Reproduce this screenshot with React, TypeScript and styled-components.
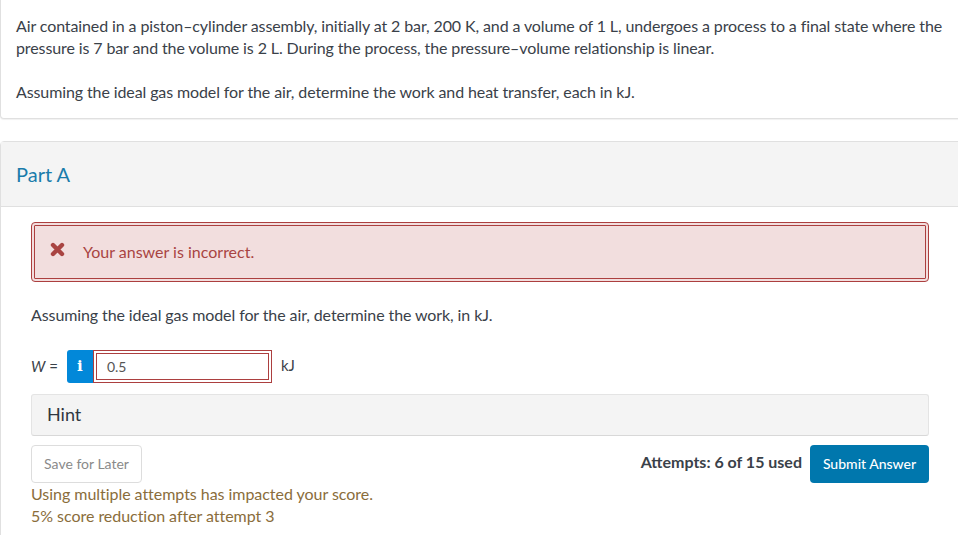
import React from "react";
import styled, { createGlobalStyle } from "styled-components";

const GlobalStyle = createGlobalStyle`
  html, body {
    margin: 0;
    padding: 0;
    background: #fff;
    overflow: hidden;
    height: 535px;
  }
  body {
    font-family: Lato, "Open Sans", sans-serif;
    color: #3a4149;
  }
`;

const Page = styled.div`
  width: 958px;
  height: 535px;
  overflow: hidden;
  display: flex;
  flex-direction: column;
`;

const QuestionCard = styled.section`
  box-sizing: border-box;
  flex: none;
  width: 970px;
  height: 119px;
  padding: 15px 15px 0;
  background: #fff;
  border: 1px solid #e0e0e0;
  border-top: 0;
  border-radius: 0 0 4px 4px;
  box-shadow: 0 1px 1px rgba(0, 0, 0, 0.06);
  font-size: 16px;
  line-height: 22px;
  letter-spacing: -0.11px;
`;

const Paragraph = styled.p`
  margin: 0 0 22px;
  width: 930px;
`;

const PartCard = styled.section`
  box-sizing: border-box;
  flex: none;
  width: 970px;
  height: 420px;
  margin-top: 22px;
  border: 1px solid #e0e0e0;
  border-radius: 4px 4px 0 0;
`;

const PartHeader = styled.header`
  box-sizing: border-box;
  height: 65px;
  padding: 0 15px;
  display: flex;
  align-items: center;
  background: #f4f4f4;
  border-bottom: 1px solid #e0e0e0;
`;

const PartTitle = styled.h2`
  margin: 0;
  font-size: 20px;
  font-weight: 400;
  color: #1a7cab;
`;

const PartBody = styled.div`
  width: 898px;
  padding: 15px 0 0 30px;
  display: flex;
  flex-direction: column;
`;

const Alert = styled.div`
  box-sizing: border-box;
  height: 60px;
  padding: 0 18px 2px;
  display: flex;
  align-items: center;
  gap: 18px;
  background: #f2dede;
  border: 1px solid #ac3f3f;
  outline: 1px solid #ac3f3f;
  outline-offset: -4px;
  border-radius: 4px;
  color: #a94442;
  font-size: 16px;
`;

const CrossIcon = styled.svg`
  width: 15px;
  height: 15px;
  flex: none;
  margin-top: -3px;
`;

const Prompt = styled.p`
  margin: 22px 0 0;
  font-size: 16px;
  line-height: 22px;
  letter-spacing: -0.1px;
`;

const AnswerRow = styled.div`
  margin-top: 24px;
  height: 33px;
  display: flex;
  align-items: center;
`;

const VarLabel = styled.span`
  font-size: 15px;
  margin: -2px 9px 0 0;

  i {
    font-style: italic;
  }
`;

const InfoButton = styled.span`
  width: 26px;
  height: 33px;
  display: flex;
  align-items: center;
  justify-content: center;
  background: #0288d9;
  border-radius: 3px 0 0 3px;
  color: #fff;
  font-family: "DejaVu Serif", serif;
  font-weight: 700;
  font-size: 15px;
  padding-bottom: 2px;
  box-sizing: border-box;
`;

const AnswerInput = styled.div`
  box-sizing: border-box;
  width: 179px;
  height: 33px;
  padding: 0 0 0 13px;
  display: flex;
  align-items: center;
  border: 1px solid #ac3f3f;
  outline: 1px solid #ac3f3f;
  outline-offset: -4px;
  font-size: 14px;
  color: #555;
`;

const Unit = styled.span`
  margin-left: 9px;
  margin-top: -4px;
  font-size: 15px;
`;

const HintBar = styled.div`
  box-sizing: border-box;
  height: 42px;
  margin-top: 11px;
  padding: 0 15px 2px;
  display: flex;
  align-items: center;
  background: #f4f4f4;
  border: 1px solid #e4e4e4;
  border-bottom-color: #d8d8d8;
  border-radius: 3px;
  font-size: 18px;
  color: #2f3740;
`;

const ActionRow = styled.div`
  margin-top: 9px;
  display: flex;
  align-items: center;
  gap: 8px;
`;

const SaveButton = styled.button`
  box-sizing: border-box;
  width: 111px;
  height: 38px;
  padding: 0 0 2px;
  margin-right: auto;
  background: #fff;
  border: 1px solid #ddd;
  border-radius: 4px;
  font: 400 14px Lato, sans-serif;
  color: #8a8a8a;
`;

const Attempts = styled.span`
  font-size: 16px;
  font-weight: 700;
  margin-bottom: 6px;
  color: #3a4149;
`;

const SubmitButton = styled.button`
  box-sizing: border-box;
  width: 119px;
  height: 38px;
  padding: 0 0 2px;
  background: #0077ad;
  border: 0;
  border-radius: 4px;
  font: 500 14px Lato, sans-serif;
  color: #fff;
`;

const ScoreNote = styled.p`
  margin: 0;
  font-size: 16px;
  line-height: 22px;
  letter-spacing: -0.04px;
  color: #8a6d3b;
`;

export default function App() {
  return (
    <Page>
      <GlobalStyle />
      <QuestionCard>
        <Paragraph>
          Air contained in a piston–cylinder assembly, initially at 2 bar, 200 K, and a volume of 1 L, undergoes a
          process to a final state where the pressure is 7 bar and the volume is 2 L. During the process, the
          pressure–volume relationship is linear.
        </Paragraph>
        <Paragraph>Assuming the ideal gas model for the air, determine the work and heat transfer, each in kJ.</Paragraph>
      </QuestionCard>
      <PartCard>
        <PartHeader>
          <PartTitle>Part A</PartTitle>
        </PartHeader>
        <PartBody>
          <Alert>
            <CrossIcon viewBox="0 0 15 15" aria-hidden="true">
              <path d="M3 3L12 12M12 3L3 12" stroke="#a94442" strokeWidth="4.4" strokeLinecap="round" fill="none" />
            </CrossIcon>
            <span>Your answer is incorrect.</span>
          </Alert>
          <Prompt>Assuming the ideal gas model for the air, determine the work, in kJ.</Prompt>
          <AnswerRow>
            <VarLabel>
              <i>W</i> =
            </VarLabel>
            <InfoButton>i</InfoButton>
            <AnswerInput>0.5</AnswerInput>
            <Unit>kJ</Unit>
          </AnswerRow>
          <HintBar>Hint</HintBar>
          <ActionRow>
            <SaveButton>Save for Later</SaveButton>
            <Attempts>Attempts: 6 of 15 used</Attempts>
            <SubmitButton>Submit Answer</SubmitButton>
          </ActionRow>
          <ScoreNote>
            Using multiple attempts has impacted your score.
            <br />
            5% score reduction after attempt 3
          </ScoreNote>
        </PartBody>
      </PartCard>
    </Page>
  );
}
